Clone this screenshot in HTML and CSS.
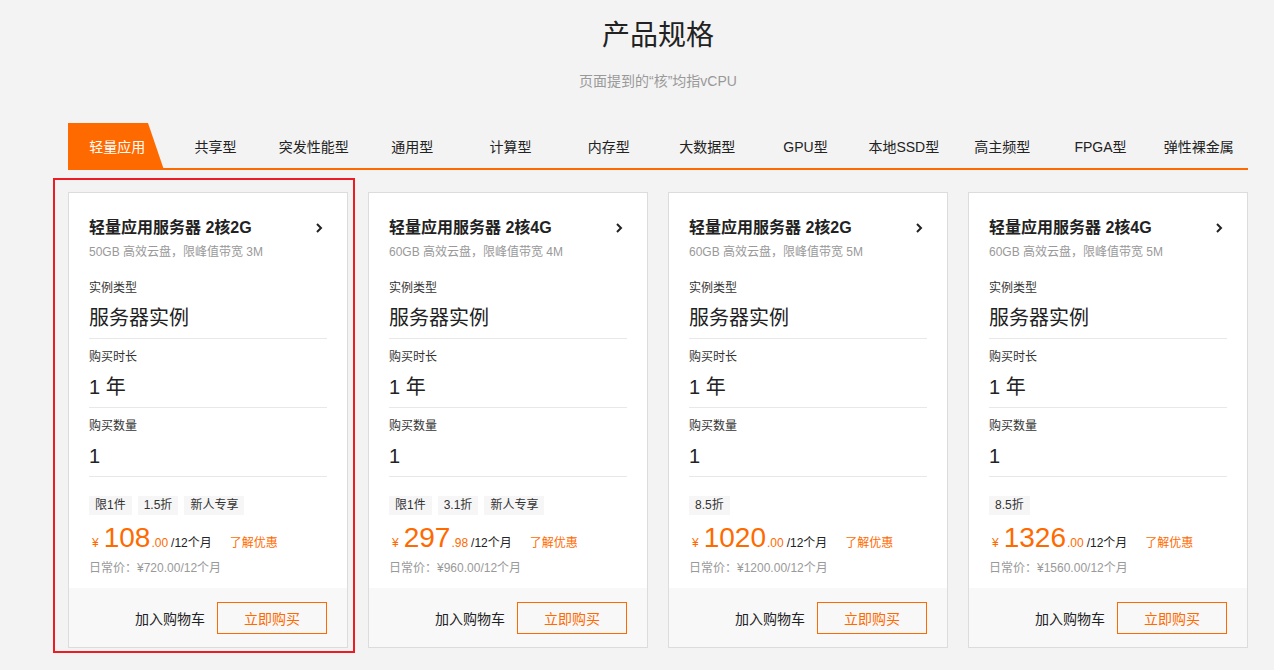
FILE: index.html
```html
<!DOCTYPE html>
<html lang="zh-CN">
<head>
<meta charset="utf-8">
<title>产品规格</title>
<link rel="stylesheet" href="styles.css">
</head>
<body>
<div class="page">
  <header class="head">
    <h1 class="head-title">产品规格</h1>
    <p class="head-sub">页面提到的“核”均指vCPU</p>
  </header>

  <nav class="tabs">
    <div class="tab tab-active"><span>轻量应用</span></div>
    <div class="tab"><span>共享型</span></div>
    <div class="tab"><span>突发性能型</span></div>
    <div class="tab"><span>通用型</span></div>
    <div class="tab"><span>计算型</span></div>
    <div class="tab"><span>内存型</span></div>
    <div class="tab"><span>大数据型</span></div>
    <div class="tab"><span>GPU型</span></div>
    <div class="tab"><span>本地SSD型</span></div>
    <div class="tab"><span>高主频型</span></div>
    <div class="tab"><span>FPGA型</span></div>
    <div class="tab"><span>弹性裸金属</span></div>
  </nav>

  <section class="cards">
    <div class="card-wrap">
      <article class="card">
        <div class="card-body">
          <div class="card-head">
            <h2 class="card-title">轻量应用服务器 2核2G</h2>
            <svg class="chev" width="8" height="12" viewBox="0 0 8 12"><polyline points="2,2 6,6 2,10" fill="none" stroke="#222" stroke-width="2"/></svg>
          </div>
          <p class="card-desc">50GB 高效云盘，限峰值带宽 3M</p>
          <div class="spec spec-first"><div class="spec-label">实例类型</div><div class="spec-value">服务器实例</div></div>
          <div class="spec"><div class="spec-label">购买时长</div><div class="spec-value">1 年</div></div>
          <div class="spec"><div class="spec-label">购买数量</div><div class="spec-value">1</div></div>
          <div class="tags"><span class="tag">限1件</span><span class="tag">1.5折</span><span class="tag">新人专享</span></div>
          <div class="price"><span class="yen">¥</span><span class="big">108</span><span class="dec">.00</span><span class="per">/12个月</span><a class="promo">了解优惠</a></div>
          <p class="normal">日常价：¥720.00/12个月</p>
        </div>
        <div class="card-foot"><span class="cart">加入购物车</span><span class="buy">立即购买</span></div>
      </article>
      <div class="highlight"></div>
    </div>

    <div class="card-wrap">
      <article class="card">
        <div class="card-body">
          <div class="card-head">
            <h2 class="card-title">轻量应用服务器 2核4G</h2>
            <svg class="chev" width="8" height="12" viewBox="0 0 8 12"><polyline points="2,2 6,6 2,10" fill="none" stroke="#222" stroke-width="2"/></svg>
          </div>
          <p class="card-desc">60GB 高效云盘，限峰值带宽 4M</p>
          <div class="spec spec-first"><div class="spec-label">实例类型</div><div class="spec-value">服务器实例</div></div>
          <div class="spec"><div class="spec-label">购买时长</div><div class="spec-value">1 年</div></div>
          <div class="spec"><div class="spec-label">购买数量</div><div class="spec-value">1</div></div>
          <div class="tags"><span class="tag">限1件</span><span class="tag">3.1折</span><span class="tag">新人专享</span></div>
          <div class="price"><span class="yen">¥</span><span class="big">297</span><span class="dec">.98</span><span class="per">/12个月</span><a class="promo">了解优惠</a></div>
          <p class="normal">日常价：¥960.00/12个月</p>
        </div>
        <div class="card-foot"><span class="cart">加入购物车</span><span class="buy">立即购买</span></div>
      </article>
    </div>

    <div class="card-wrap">
      <article class="card">
        <div class="card-body">
          <div class="card-head">
            <h2 class="card-title">轻量应用服务器 2核2G</h2>
            <svg class="chev" width="8" height="12" viewBox="0 0 8 12"><polyline points="2,2 6,6 2,10" fill="none" stroke="#222" stroke-width="2"/></svg>
          </div>
          <p class="card-desc">60GB 高效云盘，限峰值带宽 5M</p>
          <div class="spec spec-first"><div class="spec-label">实例类型</div><div class="spec-value">服务器实例</div></div>
          <div class="spec"><div class="spec-label">购买时长</div><div class="spec-value">1 年</div></div>
          <div class="spec"><div class="spec-label">购买数量</div><div class="spec-value">1</div></div>
          <div class="tags"><span class="tag">8.5折</span></div>
          <div class="price"><span class="yen">¥</span><span class="big">1020</span><span class="dec">.00</span><span class="per">/12个月</span><a class="promo">了解优惠</a></div>
          <p class="normal">日常价：¥1200.00/12个月</p>
        </div>
        <div class="card-foot"><span class="cart">加入购物车</span><span class="buy">立即购买</span></div>
      </article>
    </div>

    <div class="card-wrap">
      <article class="card">
        <div class="card-body">
          <div class="card-head">
            <h2 class="card-title">轻量应用服务器 2核4G</h2>
            <svg class="chev" width="8" height="12" viewBox="0 0 8 12"><polyline points="2,2 6,6 2,10" fill="none" stroke="#222" stroke-width="2"/></svg>
          </div>
          <p class="card-desc">60GB 高效云盘，限峰值带宽 5M</p>
          <div class="spec spec-first"><div class="spec-label">实例类型</div><div class="spec-value">服务器实例</div></div>
          <div class="spec"><div class="spec-label">购买时长</div><div class="spec-value">1 年</div></div>
          <div class="spec"><div class="spec-label">购买数量</div><div class="spec-value">1</div></div>
          <div class="tags"><span class="tag">8.5折</span></div>
          <div class="price"><span class="yen">¥</span><span class="big">1326</span><span class="dec">.00</span><span class="per">/12个月</span><a class="promo">了解优惠</a></div>
          <p class="normal">日常价：¥1560.00/12个月</p>
        </div>
        <div class="card-foot"><span class="cart">加入购物车</span><span class="buy">立即购买</span></div>
      </article>
    </div>
  </section>
</div>
</body>
</html>
```

FILE: styles.css
```css
* { box-sizing: border-box; }

html, body {
  margin: 0;
  padding: 0;
  background: #f3f3f3;
  font-family: "Liberation Sans", "Noto Sans CJK SC", sans-serif;
  color: #333;
}

.page {
  width: 1180px;
  margin-left: 68px;
  padding-bottom: 22px;
}

.head {
  padding-top: 16px;
  text-align: center;
}

.head-title {
  margin: 0;
  font-size: 28px;
  line-height: 40px;
  font-weight: normal;
  color: #222;
}

.head-sub {
  margin: 15px 0 0;
  font-size: 14px;
  line-height: 20px;
  color: #999;
}

.tabs {
  margin-top: 32px;
  display: grid;
  grid-template-columns: repeat(12, 1fr);
  border-bottom: 2px solid #ff6a00;
}

.tab {
  position: relative;
  height: 45px;
  display: flex;
  align-items: center;
  justify-content: center;
  font-size: 14px;
  color: #222;
  white-space: nowrap;
}

.tab span { position: relative; }

.tab-active { color: #fff; }

.tab-active::before {
  content: "";
  position: absolute;
  left: 0;
  top: 0;
  width: 96px;
  height: 47px;
  background: #ff6a00;
  clip-path: polygon(0 0, 80px 0, 96px 100%, 0 100%);
}

.cards {
  margin-top: 22px;
  display: grid;
  grid-template-columns: repeat(4, 280px);
  align-items: start;
  gap: 20px;
}

.card-wrap {
  position: relative;
}

.card {
  background: #fff;
  border: 1px solid #dcdcdc;
  display: flex;
  flex-direction: column;
}

.highlight {
  position: absolute;
  left: -15px;
  top: -14px;
  width: 302px;
  height: 475px;
  border: 2px solid #ec1c24;
  pointer-events: none;
}

.card-body {
  padding: 25px 20px 12px;
}

.card-head {
  display: flex;
  align-items: center;
  justify-content: space-between;
  padding-right: 4px;
}

.card-title {
  margin: 0;
  font-size: 16px;
  line-height: 20px;
  font-weight: bold;
  color: #222;
}

.chev { display: block; }

.card-desc {
  margin: 6px 0 0;
  font-size: 12px;
  line-height: 16px;
  color: #999;
}

.spec {
  padding: 10px 0 6px;
  border-bottom: 1px solid #e8e8e8;
}

.spec-first { padding-top: 20px; }

.spec-label {
  font-size: 12px;
  line-height: 16px;
  color: #333;
}

.spec-value {
  margin-top: 8px;
  font-size: 20px;
  line-height: 28px;
  color: #222;
}

.tags {
  margin-top: 19px;
  display: flex;
  gap: 6px;
}

.tag {
  height: 19px;
  line-height: 19px;
  padding: 0 6px;
  background: #f6f6f6;
  font-size: 12px;
  color: #333;
}

.price {
  margin-top: 7px;
  height: 32px;
  display: flex;
  align-items: baseline;
  color: #ff6a00;
}

.yen {
  font-size: 12px;
  margin: 0 5px 0 3px;
}

.big {
  font-size: 28px;
  line-height: 32px;
}

.dec {
  font-size: 12px;
  margin-left: 1px;
}

.per {
  font-size: 12px;
  color: #222;
  margin-left: 3px;
}

.promo {
  font-size: 12px;
  color: #ff6a00;
  margin-left: 18px;
}

.normal {
  margin: 6px 0 0;
  font-size: 12px;
  line-height: 16px;
  color: #999;
}

.card-foot {
  height: 59px;
  background: #f8f8f8;
  display: flex;
  align-items: center;
  justify-content: flex-end;
  gap: 12px;
  padding-right: 20px;
}

.cart {
  font-size: 14px;
  color: #222;
}

.buy {
  width: 110px;
  height: 32px;
  border: 1px solid #ff6a00;
  color: #ff6a00;
  font-size: 14px;
  display: flex;
  align-items: center;
  justify-content: center;
}
```
